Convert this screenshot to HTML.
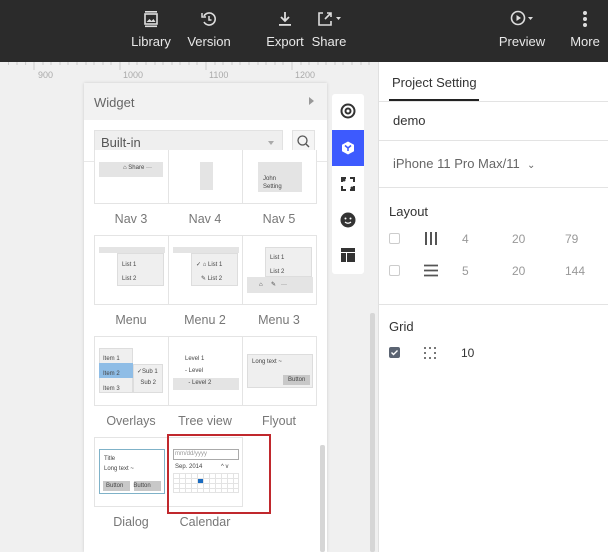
<!DOCTYPE html>
<html><head><meta charset="utf-8"><style>
*{box-sizing:border-box;margin:0;padding:0}
body{width:608px;height:552px;overflow:hidden;background:#f0f0f0;font-family:"Liberation Sans",sans-serif;position:relative}
.top{position:absolute;left:0;top:0;width:608px;height:62px;background:#2b2b2b;color:#e8e8e8;font-size:13px}
.tb{position:absolute;top:10px;text-align:center}
.tb svg{display:block;margin:0 auto 6px}
.ruler{position:absolute;left:0;top:62px;width:378px;height:18px;font-size:9px;color:#aaa}
.ruler span{position:absolute;top:8px}
.panel{position:absolute;left:84px;top:83px;width:243px;height:469px;background:#fff;box-shadow:0 0 3px rgba(0,0,0,.15)}
.ph{height:37px;background:#f2f2f2;font-size:13px;color:#666;padding:12px 10px}
.sel{position:absolute;left:10px;top:47px;width:189px;height:23px;background:#efefef;border:1px solid #e2e2e2;font-size:13px;color:#555;padding:4px 6px}
.srch{position:absolute;left:208px;top:47px;width:23px;height:23px;border:1px solid #e2e2e2;background:#f5f5f5}
.cell{position:absolute;border:1px solid #e4e4e4;background:#fff;overflow:hidden}
.lbl{position:absolute;width:74px;text-align:center;font-size:12.5px;color:#777}
.mini{position:absolute;font-size:6px;color:#444}
.tools{position:absolute;left:332px;top:94px;width:32px;height:180px;background:#fff;border-radius:3px}
.right{position:absolute;left:378px;top:62px;width:230px;height:490px;background:#fff;border-left:1px solid #e0e0e0}
.hr{position:absolute;left:0;width:230px;height:1px;background:#e3e3e3}
.t{position:absolute;font-size:13px;color:#333}
.g{position:absolute;font-size:12px;color:#999}
.cb{position:absolute;width:11px;height:11px;border:1px solid #ccc;border-radius:2px}
</style></head><body>
<div class="top">
 <div class="tb" style="left:130px;width:42px"><svg width="16" height="18" viewBox="0 0 16 18"><rect x="2" y="1" width="12" height="1.6" fill="#ddd"/><rect x="2" y="4" width="12" height="10" fill="none" stroke="#ddd" stroke-width="1.6"/><path d="M3.5 12l3-3 2 2 2-2 2 3z" fill="#ddd"/><rect x="2" y="15.5" width="12" height="1.6" fill="#ddd"/></svg>Library</div>
 <div class="tb" style="left:186px;width:46px"><svg width="16" height="18" viewBox="0 0 16 18"><path d="M3 6a6 6 0 1 1 0 6" fill="none" stroke="#ddd" stroke-width="1.6"/><path d="M1 3v4h4" fill="none" stroke="#ddd" stroke-width="1.5"/><path d="M8 6v4h2.5" fill="none" stroke="#ddd" stroke-width="1.5"/></svg>Version</div>
 <div class="tb" style="left:265px;width:40px"><svg width="16" height="18" viewBox="0 0 16 18"><path d="M8 2v9M4 7l4 4 4-4" fill="none" stroke="#ddd" stroke-width="1.8"/><rect x="2" y="14" width="12" height="1.8" fill="#ddd"/></svg>Export</div>
 <div class="tb" style="left:311px;width:36px"><svg width="26" height="18" viewBox="0 0 26 18"><path d="M7 3H3v12h12v-4" fill="none" stroke="#ddd" stroke-width="1.6"/><path d="M9 9l6-6M11 3h4v4" fill="none" stroke="#ddd" stroke-width="1.6"/><path d="M20 7h5l-2.5 3z" fill="#ddd"/></svg>Share</div>
 <div class="tb" style="left:498px;width:48px"><svg width="26" height="18" viewBox="0 0 26 18"><circle cx="9" cy="8" r="6.5" fill="none" stroke="#ddd" stroke-width="1.6"/><path d="M7.5 5v6l4.5-3z" fill="#ddd"/><path d="M19 7h5l-2.5 3z" fill="#ddd"/></svg>Preview</div>
 <div class="tb" style="left:568px;width:34px"><svg width="6" height="18" viewBox="0 0 6 18"><circle cx="3" cy="3" r="2" fill="#ddd"/><circle cx="3" cy="9" r="2" fill="#ddd"/><circle cx="3" cy="15" r="2" fill="#ddd"/></svg>More</div>
</div>
<div class="ruler"><svg width="378" height="10" style="position:absolute;top:0;left:0"><g stroke="#ccc"><path d="M34 0v8M120 0v8M206 0v8M292 0v8"/><path d="M8.5 0v3M17 0v3M25.6 0v3M43 0v3M51 0v3M60 0v3M68 0v3M77 0v3M86 0v3M94 0v3M103 0v3M111 0v3M129 0v3M137 0v3M146 0v3M155 0v3M163 0v3M172 0v3M180 0v3M189 0v3M197 0v3M215 0v3M223 0v3M232 0v3M240 0v3M249 0v3M258 0v3M266 0v3M275 0v3M283 0v3M301 0v3M309 0v3M318 0v3M326 0v3M335 0v3M343 0v3M352 0v3M361 0v3M369 0v3"/></g></svg>
<span style="left:38px">900</span><span style="left:123px">1000</span><span style="left:209px">1100</span><span style="left:295px">1200</span></div>
<div style="position:absolute;left:370px;top:313px;width:5px;height:239px;background:#d6d6d6;border-radius:2px"></div>
<div class="panel">
 <div class="ph">Widget<span style="position:absolute;right:13px;top:14px;border-left:5px solid #999;border-top:4px solid transparent;border-bottom:4px solid transparent"></span></div>
 <div class="sel">Built-in<span style="position:absolute;right:8px;top:10px;border-top:4px solid #aaa;border-left:3px solid transparent;border-right:3px solid transparent"></span></div>
 <div class="srch"><svg width="21" height="21" viewBox="0 0 21 21"><circle cx="9.5" cy="9.5" r="4.5" fill="none" stroke="#555" stroke-width="1.3"/><path d="M13 13l3 3" stroke="#555" stroke-width="1.4"/></svg></div>
 <div style="position:absolute;left:0;top:78px;width:243px;height:1px;background:#e8e8e8"></div>
 <div style="position:absolute;left:236px;top:362px;width:5px;height:107px;background:#d6d6d6;border-radius:2px"></div>
 <div class="cell" style="left:10px;top:67px;width:75px;height:54px;border-top:none"><div style="position:absolute;left:4px;top:12px;width:64px;height:15px;background:#e4e4e4"></div><div class="mini" style="left:28px;top:15px">⌂ Share ···</div></div>
 <div class="cell" style="left:84px;top:67px;width:75px;height:54px;border-top:none"><div style="position:absolute;left:31px;top:12px;width:13px;height:28px;background:#e4e4e4"></div></div>
 <div class="cell" style="left:158px;top:67px;width:75px;height:54px;border-top:none"><div style="position:absolute;left:15px;top:12px;width:44px;height:30px;background:#e4e4e4"></div><div class="mini" style="left:20px;top:25px;line-height:8px">John<br>Setting</div></div>
 <div class="lbl" style="left:10px;top:129px">Nav 3</div><div class="lbl" style="left:84px;top:129px">Nav 4</div><div class="lbl" style="left:158px;top:129px">Nav 5</div>
 <div class="cell" style="left:10px;top:152px;width:75px;height:70px"><div style="position:absolute;left:4px;top:11px;width:66px;height:6px;background:#e4e4e4"></div><div style="position:absolute;left:22px;top:17px;width:47px;height:33px;background:#efefef;border:1px solid #ddd"></div><div class="mini" style="left:27px;top:22px;line-height:14px">List 1<br>List 2</div></div>
 <div class="cell" style="left:84px;top:152px;width:75px;height:70px"><div style="position:absolute;left:4px;top:11px;width:66px;height:6px;background:#e4e4e4"></div><div style="position:absolute;left:22px;top:17px;width:47px;height:33px;background:#efefef;border:1px solid #ddd"></div><div class="mini" style="left:27px;top:22px;line-height:14px">✓ ⌂ List 1<br>&nbsp;&nbsp;&nbsp;✎ List 2</div></div>
 <div class="cell" style="left:158px;top:152px;width:75px;height:70px"><div style="position:absolute;left:22px;top:11px;width:47px;height:30px;background:#efefef;border:1px solid #ddd"></div><div class="mini" style="left:27px;top:15px;line-height:14px">List 1<br>List 2</div><div style="position:absolute;left:4px;top:41px;width:66px;height:16px;background:#e4e4e4"></div><div class="mini" style="left:16px;top:45px">⌂ &nbsp;&nbsp;&nbsp;&nbsp;✎ &nbsp;&nbsp;···</div></div>
 <div class="lbl" style="left:10px;top:230px">Menu</div><div class="lbl" style="left:84px;top:230px">Menu 2</div><div class="lbl" style="left:158px;top:230px">Menu 3</div>
 <div class="cell" style="left:10px;top:253px;width:75px;height:70px"><div style="position:absolute;left:4px;top:11px;width:34px;height:45px;background:#efefef;border:1px solid #ddd"></div><div style="position:absolute;left:4px;top:26px;width:34px;height:15px;background:#8fbde6"></div><div style="position:absolute;left:38px;top:27px;width:30px;height:29px;background:#efefef;border:1px solid #ddd"></div><div class="mini" style="left:8px;top:15px;line-height:15px">Item 1<br>Item 2<br>Item 3</div><div class="mini" style="left:42px;top:30px;line-height:11px">✓Sub 1<br>&nbsp;&nbsp;Sub 2</div></div>
 <div class="cell" style="left:84px;top:253px;width:75px;height:70px"><div style="position:absolute;left:4px;top:41px;width:66px;height:12px;background:#e4e4e4"></div><div class="mini" style="left:16px;top:16px;line-height:12px">Level 1<br>- Level<br>&nbsp;&nbsp;- Level 2</div></div>
 <div class="cell" style="left:158px;top:253px;width:75px;height:70px"><div style="position:absolute;left:4px;top:17px;width:66px;height:34px;background:#efefef;border:1px solid #ddd"></div><div class="mini" style="left:9px;top:22px">Long text ~</div><div style="position:absolute;left:40px;top:38px;width:27px;height:10px;background:#c8c8c8"></div><div class="mini" style="left:45px;top:40px">Button</div></div>
 <div class="lbl" style="left:10px;top:331px">Overlays</div><div class="lbl" style="left:84px;top:331px">Tree view</div><div class="lbl" style="left:158px;top:331px">Flyout</div>
 <div class="cell" style="left:10px;top:354px;width:75px;height:70px"><div style="position:absolute;left:4px;top:11px;width:66px;height:45px;border:1px solid #7fb2c8"></div><div class="mini" style="left:9px;top:16px;line-height:10px">Title<br>Long text ~</div><div style="position:absolute;left:8px;top:43px;width:27px;height:10px;background:#c8c8c8"></div><div style="position:absolute;left:39px;top:43px;width:27px;height:10px;background:#c8c8c8"></div><div class="mini" style="left:11px;top:45px">Button &nbsp;&nbsp;&nbsp;&nbsp;&nbsp;Button</div></div>
 <div class="cell" style="left:84px;top:354px;width:75px;height:70px"><div style="position:absolute;left:4px;top:11px;width:66px;height:11px;border:1px solid #aaa"></div><div class="mini" style="left:6px;top:13px;color:#999">mm/dd/yyyy</div><div class="mini" style="left:6px;top:26px">Sep. 2014</div><div class="mini" style="left:52px;top:26px">^ v</div><svg style="position:absolute;left:4px;top:35px" width="66" height="20"><g stroke="#e3e3e3" fill="none"><path d="M0 .5h66M0 5.5h66M0 10.5h66M0 15.5h66M0 19.5h66"/><path d="M.5 0v20M6.5 0v20M12.5 0v20M18.5 0v20M24.5 0v20M30.5 0v20M36.5 0v20M42.5 0v20M48.5 0v20M54.5 0v20M60.5 0v20M65.5 0v20"/></g><rect x="25" y="6" width="5" height="4" fill="#1a6bc0"/></svg></div>
 <div class="lbl" style="left:10px;top:432px">Dialog</div><div class="lbl" style="left:84px;top:432px">Calendar</div>
 <div style="position:absolute;left:83px;top:351px;width:104px;height:80px;border:2px solid #c0282d"></div>
</div>
<div class="tools">
 <svg style="position:absolute;left:8px;top:9px" width="16" height="16"><circle cx="8" cy="8" r="6.5" fill="none" stroke="#333" stroke-width="2"/><circle cx="8" cy="8" r="2.5" fill="none" stroke="#333" stroke-width="2"/></svg>
 <div style="position:absolute;left:0;top:36px;width:32px;height:36px;background:#3d5afe"><svg style="position:absolute;left:9px;top:11px" width="14" height="14"><path d="M7 0.5l6 3.2v6.6l-6 3.2-6-3.2V3.7z" fill="#fff"/><path d="M4 4.5l3 2.5 3-2.5M7 7v3" stroke="#3d5afe" stroke-width="1.5" fill="none"/></svg></div>
 <svg style="position:absolute;left:9px;top:83px" width="14" height="14"><g fill="none" stroke="#333" stroke-width="2"><path d="M1 5V1h4M9 1h4v4M13 9v4h-4M5 13H1V9"/></g><circle cx="3" cy="3" r="1.5" fill="#333"/><circle cx="11" cy="11" r="1.5" fill="#333"/></svg>
 <svg style="position:absolute;left:8px;top:118px" width="16" height="16"><circle cx="8" cy="8" r="7.5" fill="#333"/><circle cx="5.5" cy="6.5" r="1" fill="#fff"/><circle cx="10.5" cy="6.5" r="1" fill="#fff"/><path d="M5 10q3 2.5 6 0" stroke="#fff" stroke-width="1.2" fill="none"/></svg>
 <svg style="position:absolute;left:9px;top:154px" width="14" height="14"><rect x="0" y="0" width="14" height="4" fill="#333"/><rect x="0" y="5" width="5" height="9" fill="#333"/><rect x="6" y="5" width="8" height="9" fill="#333"/></svg>
</div>
<div class="right">
 <div class="t" style="left:13px;top:13px">Project Setting</div>
 <div style="position:absolute;left:10px;top:37px;width:90px;height:2px;background:#222"></div>
 <div class="hr" style="top:39px"></div>
 <div class="t" style="left:14px;top:51px">demo</div>
 <div class="hr" style="top:78px"></div>
 <div class="t" style="left:14px;top:94px;color:#666">iPhone 11 Pro Max/11 &nbsp;<span style="font-size:10px">⌄</span></div>
 <div class="hr" style="top:125px"></div>
 <div class="t" style="left:10px;top:142px">Layout</div>
 <div class="cb" style="left:10px;top:171px"></div>
 <svg style="position:absolute;left:45px;top:170px" width="14" height="13"><path d="M2 0v13M7 0v13M12 0v13" stroke="#555" stroke-width="2"/></svg>
 <div class="g" style="left:83px;top:170px">4</div><div class="g" style="left:133px;top:170px">20</div><div class="g" style="left:186px;top:170px">79</div>
 <div class="cb" style="left:10px;top:203px"></div>
 <svg style="position:absolute;left:45px;top:202px" width="14" height="13"><path d="M0 1.5h14M0 6.5h14M0 11.5h14" stroke="#555" stroke-width="1.8"/></svg>
 <div class="g" style="left:83px;top:202px">5</div><div class="g" style="left:133px;top:202px">20</div><div class="g" style="left:186px;top:202px">144</div>
 <div class="hr" style="top:242px"></div>
 <div class="t" style="left:10px;top:257px">Grid</div>
 <div class="cb" style="left:10px;top:285px;background:#5b6472;border-color:#5b6472"><svg width="9" height="9" style="position:absolute;left:0;top:0"><path d="M1.5 4.5l2 2 4-4" stroke="#fff" stroke-width="1.4" fill="none"/></svg></div>
 <svg style="position:absolute;left:45px;top:285px" width="12" height="12" fill="#777"><rect x="0" y="0" width="2" height="2"/><rect x="5" y="0" width="2" height="2"/><rect x="10" y="0" width="2" height="2"/><rect x="0" y="5" width="2" height="2"/><rect x="10" y="5" width="2" height="2"/><rect x="0" y="10" width="2" height="2"/><rect x="5" y="10" width="2" height="2"/><rect x="10" y="10" width="2" height="2"/></svg>
 <div class="t" style="left:82px;top:284px;font-size:12px">10</div>
</div>
</body></html>
